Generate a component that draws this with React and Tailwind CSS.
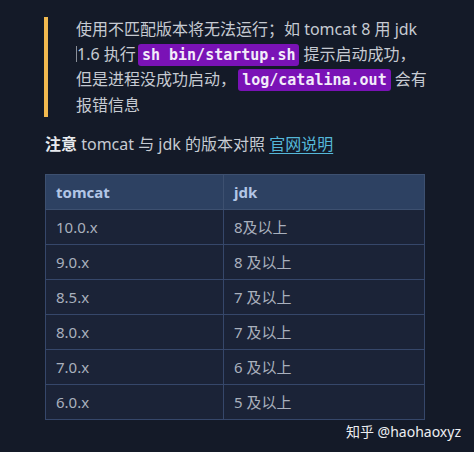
import React from 'react';

const rows = [
  ['10.0.x', '8及以上'],
  ['9.0.x', '8 及以上'],
  ['8.5.x', '7 及以上'],
  ['8.0.x', '7 及以上'],
  ['7.0.x', '6 及以上'],
  ['6.0.x', '5 及以上'],
];

const Code = ({ children }) => (
  <code className="ml-[-2px] rounded-[3px] bg-[#7a12b6] px-[4px] py-[2px] font-['DejaVu_Sans_Mono',monospace] text-[15px] font-bold text-[#f3ecfa]">
    {children}
  </code>
);

export default function App() {
  return (
    <div className="h-[452px] w-[474px] overflow-hidden bg-[#141a28] font-['Noto_Sans','Noto_Sans_CJK_SC',sans-serif]">
      {/* quote block */}
      <div className="ml-[44px] mt-[17px] border-l-[4px] border-[#f2b94f] pl-[28px]">
        <p className="w-[360px] text-[16px] leading-[24.5px] text-[#c6cad2]">
          使用不匹配版本将无法运行；如 tomcat 8 用 jdk
          <br />
          <span className="inline-block h-[16px] w-px translate-y-[2px] bg-[#8a8f99]" />
          1.6 执行 <Code>sh bin/startup.sh</Code> 提示启动成功，
          <br />
          但是进程没成功启动， <Code>log/catalina.out</Code> 会有
          <br />
          报错信息
        </p>
      </div>

      <p className="ml-[45px] mt-[15px] text-[16px] leading-[24px] text-[#c6cad2]">
        <span className="font-bold text-[#e8eaee]">注意</span> tomcat 与 jdk 的版本对照{' '}
        <span className="text-[#55b7d8] underline underline-offset-[3px]">官网说明</span>
      </p>

      {/* version table */}
      <table className="ml-[45px] mt-[18px] w-[380px] border-collapse text-[15px]">
        <thead>
          <tr className="h-[35px] bg-[#2d4162]">
            <th className="w-[178px] border border-[#3d5070] px-[10px] text-left font-bold text-[#b3c6e6]">tomcat</th>
            <th className="border border-[#3d5070] px-[10px] text-left font-bold text-[#b3c6e6]">jdk</th>
          </tr>
        </thead>
        <tbody>
          {rows.map(([t, j]) => (
            <tr key={t} className="h-[35px] bg-[#1b2337]">
              <td className="border border-[#36476a] px-[10px] text-[#a9b0bd]">{t}</td>
              <td className="border border-[#36476a] px-[10px] text-[#a9b0bd]">{j}</td>
            </tr>
          ))}
        </tbody>
      </table>

      <div className="mt-[1px] flex justify-end pr-[13px]">
        <span className="text-[14px] leading-[22px] text-[#eceef2]">知乎 @haohaoxyz</span>
      </div>
    </div>
  );
}
